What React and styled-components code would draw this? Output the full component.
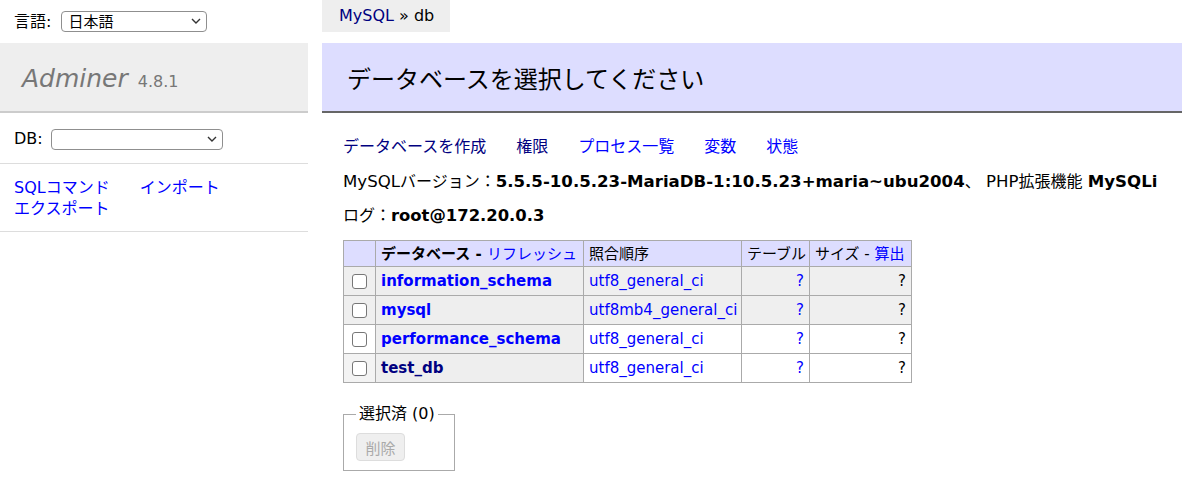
import React from 'react'
import styled, { createGlobalStyle } from 'styled-components'

const GlobalStyle = createGlobalStyle`
  body {
    margin: 0;
    background: #fff;
    color: #000;
    font: 15px/1.25 "DejaVu Sans", "Noto Sans CJK JP", sans-serif;
  }
`

const Page = styled.div`
  display: flex;
  align-items: flex-start;
  width: 1200px;
`

const Sidebar = styled.div`
  width: 308px;
  flex-shrink: 0;
`

const SideRow = styled.div`
  display: flex;
  align-items: center;
  gap: ${p => p.gap}px;
  height: ${p => p.h}px;
  padding: ${p => p.pt || 0}px 14px 0;
  border-bottom: ${p => (p.line ? '1px solid #ddd' : 'none')};
`

const Label = styled.span`
  font-size: 16px;
`

const SelectWrap = styled.span`
  position: relative;
  display: inline-flex;
  width: ${p => p.w}px;
`

const Select = styled.select`
  appearance: none;
  width: 100%;
  height: 21px;
  padding: 0 20px 0 6px;
  border: 1px solid #8f8f8f;
  border-radius: 4px;
  background: #fff;
  font: 15px "DejaVu Sans", "Noto Sans CJK JP", sans-serif;
  color: #000;
`

const Chevron = styled.svg`
  position: absolute;
  right: 6px;
  top: 7px;
  pointer-events: none;
`

const Logo = styled.div`
  height: 70px;
  box-sizing: border-box;
  background: #eee;
  border-bottom: 2px solid #ccc;
  display: flex;
  align-items: baseline;
  padding: 20px 0 0 22px;
  color: #777;
`

const LogoName = styled.span`
  font-size: 25px;
  font-style: italic;
`

const LogoVersion = styled.span`
  font-size: 16px;
  margin-left: 10px;
`

const SideLinks = styled.div`
  padding: 14px 14px 12px;
  border-bottom: 1px solid #ddd;
`

const SideLinkBox = styled.div`
  display: flex;
  flex-wrap: wrap;
  column-gap: 30px;
  row-gap: 1px;
  max-width: 220px;
`

const Link = styled.a`
  color: ${p => (p.visited ? 'navy' : 'blue')};
  text-decoration: none;
  cursor: pointer;
  font-weight: ${p => (p.bold ? 'bold' : 'normal')};
`

const Ja = styled.span`
  font-size: 16px;
`

const Main = styled.div`
  margin-left: 14px;
  width: 860px;
`

const Breadcrumb = styled.div`
  display: inline-block;
  height: 32px;
  line-height: 31px;
  padding: 0 16px 0 17px;
  background: #eee;
  font-size: 16px;
`

const Heading = styled.h2`
  margin: 11px 0 0;
  height: 68px;
  box-sizing: content-box;
  background: #ddf;
  border-bottom: 2px solid #666;
  padding: 0 0 0 25px;
  display: flex;
  align-items: center;
  font-size: 24px;
  line-height: 30px;
  font-weight: normal;
  & > span {
    position: relative;
    top: 3px;
  }
`

const Content = styled.div`
  padding-left: 21px;
`

const Line = styled.p`
  margin: ${p => p.mt}px 0 0;
  line-height: 20px;
  font-size: ${p => p.size || 15}px;
  display: flex;
  align-items: baseline;
  gap: ${p => p.gap || 0}px;
`

const Table = styled.table`
  margin-top: 14px;
  width: 568px;
  border-collapse: collapse;
  table-layout: fixed;
  border: 1px solid #aaa;
`

const HeadRow = styled.tr`
  height: 26px;
`

const BodyRow = styled.tr`
  height: 29px;
`

const Th = styled.th`
  border: 1px solid #aaa;
  background: ${p => p.bg || '#eee'};
  text-align: left;
  font-weight: ${p => (p.head ? 'normal' : 'bold')};
  padding: 0 5px;
  line-height: 18px;
  white-space: nowrap;
  overflow: hidden;
`

const Td = styled.td`
  border: 1px solid #aaa;
  background: ${p => p.bg || '#fff'};
  text-align: ${p => (p.right ? 'right' : 'left')};
  padding: 0 5px;
  line-height: 18px;
  white-space: nowrap;
`

const Check = styled.input`
  appearance: none;
  display: block;
  width: 15px;
  height: 15px;
  margin: 0 auto;
  border: 1px solid #777;
  border-radius: 3px;
  background: #fff;
`

const Fieldset = styled.fieldset`
  margin: 21px 0 0;
  width: 86px;
  padding: 9px 12px 9px;
  border: 1px solid #aaa;
`

const Legend = styled.legend`
  padding: 0 3px;
  font-size: 16px;
`

const Button = styled.button`
  width: 49px;
  height: 28px;
  border: 1px solid #ddd;
  border-radius: 4px;
  background: #efefef;
  color: #aaa;
  font: 15px "Noto Sans CJK JP", sans-serif;
  padding: 0;
`

const SelectBox = ({ w, value }) => (
  <SelectWrap w={w}>
    <Select defaultValue={value}>
      <option>{value}</option>
    </Select>
    <Chevron width="10" height="7" viewBox="0 0 10 7">
      <path d="M1 1l4 4 4-4" fill="none" stroke="#333" strokeWidth="1.4" />
    </Chevron>
  </SelectWrap>
)

const databases = [
  { name: 'information_schema', coll: 'utf8_general_ci', bg: '#efefef', checkBg: '#efefef' },
  { name: 'mysql', coll: 'utf8mb4_general_ci', bg: '#efefef', checkBg: '#efefef' },
  { name: 'performance_schema', coll: 'utf8_general_ci', bg: '#fff', checkBg: '#fff' },
  { name: 'test_db', coll: 'utf8_general_ci', bg: '#fff', checkBg: '#f3f3f3', visited: true }
]

const App = () => (
  <Page>
    <GlobalStyle />
    <Sidebar>
      <SideRow h={43} gap={10}>
        <Label>言語:</Label>
        <SelectBox w={146} value="日本語" />
      </SideRow>
      <Logo>
        <LogoName>Adminer</LogoName>
        <LogoVersion>4.8.1</LogoVersion>
      </Logo>
      <SideRow h={48} pt={2} gap={8} line>
        <Label>DB:</Label>
        <SelectBox w={172} value="" />
      </SideRow>
      <SideLinks>
        <SideLinkBox>
          <Link><Ja>SQLコマンド</Ja></Link>
          <Link><Ja>インポート</Ja></Link>
          <Link><Ja>エクスポート</Ja></Link>
        </SideLinkBox>
      </SideLinks>
    </Sidebar>
    <Main>
      <Breadcrumb>
        <Link visited>MySQL</Link> » db
      </Breadcrumb>
      <Heading>
        <span>データベースを選択してください</span>
      </Heading>
      <Content>
        <Line mt={24} gap={30}>
          <Link visited><Ja>データベースを作成</Ja></Link>
          <Link visited><Ja>権限</Ja></Link>
          <Link><Ja>プロセス一覧</Ja></Link>
          <Link><Ja>変数</Ja></Link>
          <Link><Ja>状態</Ja></Link>
        </Line>
        <Line mt={15} size={16.6}>
          <span>
            MySQL<Ja>バージョン：</Ja>
            <b>5.5.5-10.5.23-MariaDB-1:10.5.23+maria~ubu2004</b>
            <Ja>、</Ja> PHP<Ja>拡張機能</Ja> <b>MySQLi</b>
          </span>
        </Line>
        <Line mt={14} size={16.4}>
          <span>
            <Ja>ログ：</Ja><b>root@172.20.0.3</b>
          </span>
        </Line>
        <Table>
          <colgroup>
            <col style={{ width: 32 }} />
            <col style={{ width: 208 }} />
            <col style={{ width: 158 }} />
            <col style={{ width: 68 }} />
            <col style={{ width: 102 }} />
          </colgroup>
          <thead>
            <HeadRow>
              <Th head bg="#ddf" />
              <Th bg="#ddf">
                データベース - <Link>リフレッシュ</Link>
              </Th>
              <Th head bg="#ddf">照合順序</Th>
              <Th head bg="#ddf">テーブル</Th>
              <Th head bg="#ddf">
                サイズ - <Link>算出</Link>
              </Th>
            </HeadRow>
          </thead>
          <tbody>
            {databases.map(db => (
              <BodyRow key={db.name}>
                <Td bg={db.checkBg}><Check type="checkbox" /></Td>
                <Th>
                  <Link bold visited={db.visited}>{db.name}</Link>
                </Th>
                <Td bg={db.bg}><Link>{db.coll}</Link></Td>
                <Td bg={db.bg} right><Link>?</Link></Td>
                <Td bg={db.bg} right>?</Td>
              </BodyRow>
            ))}
          </tbody>
        </Table>
        <Fieldset>
          <Legend><Ja>選択済</Ja> (0)</Legend>
          <Button disabled>削除</Button>
        </Fieldset>
      </Content>
    </Main>
  </Page>
)

export default App
